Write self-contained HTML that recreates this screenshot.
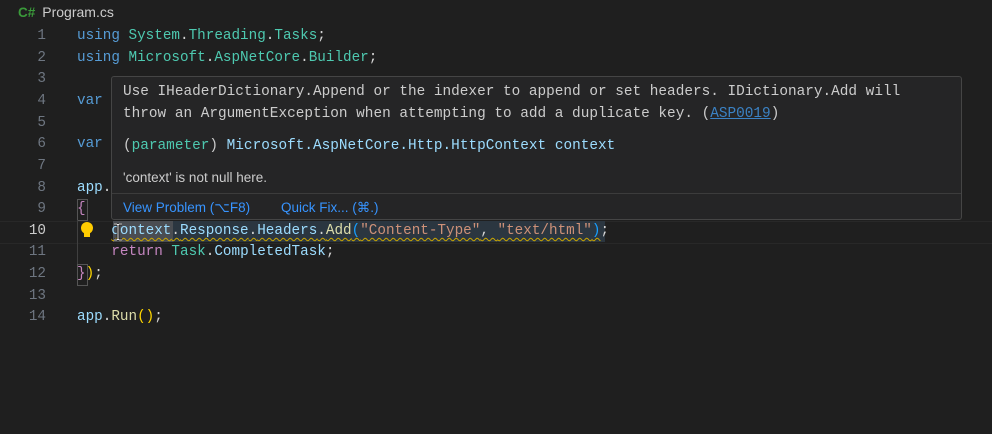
<!DOCTYPE html>
<html><head><meta charset="utf-8"><style>
body{margin:0;width:992px;height:434px;background:#1f1f1f;overflow:hidden;position:relative;font-family:"Liberation Mono",monospace;}
.tab{position:absolute;left:18px;top:4px;font:14px "Liberation Sans",sans-serif;color:#ccc;}
.tab b{color:#3a9a3a;font-size:13.5px;margin-right:7px}
.ln{position:absolute;left:0;width:46px;text-align:right;color:#6e7681;font-size:14.3px;height:21.65px;line-height:21.65px}
.cl{position:absolute;left:77px;color:#d4d4d4;font-size:14.3px;white-space:pre;height:21.65px;line-height:21.65px}
.k{color:#569cd6}.t{color:#4ec9b0}.v{color:#9cdcfe}.f{color:#dcdcaa}.s{color:#ce9178}.p{color:#c586c0}.y{color:#ffd700}.bl{color:#179fff}
.hover{position:absolute;left:111px;top:76px;width:849px;height:142px;background:#252526;border:1px solid #454545;border-radius:3px;}
.hover .m{position:absolute;left:11px;font-size:14.4px;color:#ccc;white-space:pre;line-height:22px}
.sep{position:absolute;left:0;right:0;top:116px;height:1px;background:#3c3c3c}
.sans{font-family:"Liberation Sans",sans-serif;font-size:13.5px;position:absolute}
</style></head><body>
<div class="tab"><b>C#</b>Program.cs</div>
<div style="position:absolute;left:0;top:221px;width:992px;height:21px;border-top:1px solid #282828;border-bottom:1px solid #282828"></div>
<div style="position:absolute;left:113px;top:221px;width:492px;height:21px;background:#2b3640"></div>
<div style="position:absolute;left:113px;top:221px;width:60px;height:21px;background:#4a4d52"></div>
<div style="position:absolute;left:77px;top:199px;width:9px;height:20px;border:1px solid #555"></div>
<div style="position:absolute;left:77px;top:264px;width:9px;height:20px;border:1px solid #555"></div>
<div style="position:absolute;left:77px;top:220px;width:1px;height:44px;background:#404040"></div>
<div class="ln" style="top:26px">1</div><div class="cl" style="top:26px"><span class="k">using</span> <span class="t">System</span>.<span class="t">Threading</span>.<span class="t">Tasks</span>;</div>
<div class="ln" style="top:48px">2</div><div class="cl" style="top:48px"><span class="k">using</span> <span class="t">Microsoft</span>.<span class="t">AspNetCore</span>.<span class="t">Builder</span>;</div>
<div class="ln" style="top:69px">3</div>
<div class="ln" style="top:91px">4</div><div class="cl" style="top:91px"><span class="k">var</span></div>
<div class="ln" style="top:113px">5</div>
<div class="ln" style="top:134px">6</div><div class="cl" style="top:134px"><span class="k">var</span></div>
<div class="ln" style="top:156px">7</div>
<div class="ln" style="top:178px">8</div><div class="cl" style="top:178px"><span class="v">app</span>.</div>
<div class="ln" style="top:199px">9</div><div class="cl" style="top:199px"><span class="p">{</span></div>
<div class="ln" style="top:221px;color:#ccc">10</div><div class="cl" style="top:221px">    <span class="v" style="text-decoration:underline wavy #cca700;text-decoration-thickness:1px;text-underline-offset:3px">context</span><span style="text-decoration:underline wavy #cca700;text-decoration-thickness:1px;text-underline-offset:3px">.<span class="v">Response</span>.<span class="v">Headers</span>.<span class="f">Add</span><span class="bl">(</span><span class="s">"Content-Type"</span>, <span class="s">"text/html"</span><span class="bl">)</span></span>;</div>
<div style="position:absolute;left:81px;top:222px;width:12px;height:12px;border-radius:50%;background:#ffcc00"></div>
<div style="position:absolute;left:84px;top:232px;width:6px;height:5px;background:#ffcc00"></div>
<svg style="position:absolute;left:113px;top:223px" width="10" height="18"><path d="M1 1h3l1 1 1-1h3M5 2v14M1 17h3l1-1 1 1h3" stroke="#000" stroke-width="2.5" fill="none"/><path d="M1 1h3l1 1 1-1h3M5 2v14M1 17h3l1-1 1 1h3" stroke="#fff" stroke-width="1" fill="none"/></svg>
<div class="ln" style="top:242px">11</div><div class="cl" style="top:242px">    <span class="p">return</span> <span class="t">Task</span>.<span class="v">CompletedTask</span>;</div>
<div class="ln" style="top:264px">12</div><div class="cl" style="top:264px"><span class="p">}</span><span class="y">)</span>;</div>
<div class="ln" style="top:286px">13</div>
<div class="ln" style="top:307px">14</div><div class="cl" style="top:307px"><span class="v">app</span>.<span class="f">Run</span><span class="y">()</span>;</div>
<div class="hover">
<div class="m" style="top:4px">Use IHeaderDictionary.Append or the indexer to append or set headers. IDictionary.Add will
throw an ArgumentException when attempting to add a duplicate key. (<span style="color:#3b82c4;text-decoration:underline">ASP0019</span>)</div>
<div class="m" style="top:58px">(<span class="t">parameter</span>) <span class="v">Microsoft.AspNetCore.Http.HttpContext context</span></div>
<div class="sans" style="left:11px;top:93px;color:#ccc">'context' is not null here.</div>
<div class="sep"></div>
<div class="sans" style="left:11px;top:123px;color:#3794ff">View Problem (⌥F8)</div>
<div class="sans" style="left:169px;top:123px;color:#3794ff">Quick Fix... (⌘.)</div>
</div>
</body></html>
